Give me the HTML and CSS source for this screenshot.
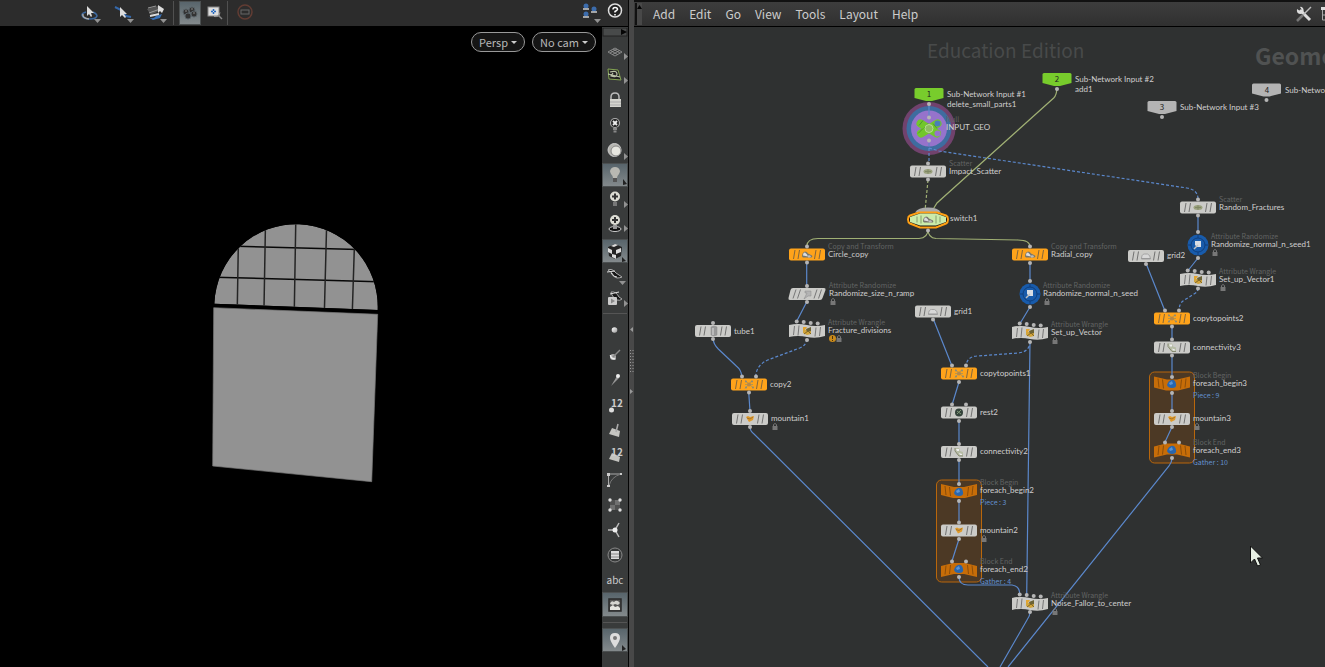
FILE: index.html
```
<!DOCTYPE HTML>
<html lang='en'>
<head>
<meta charset='utf-8'>
<title>Scene View and Network Editor</title>
<link rel="stylesheet" href="styles.css">
</head>
<body>
<!--shared shapes-->
<svg class='shared_shapes' aria-hidden='true'>
<defs>
<linearGradient id='ball' x1='0' y1='0' x2='1' y2='1'><stop offset='0' stop-color='#fff'/><stop offset='1' stop-color='#999'/></linearGradient>
<path id='caretRight' d='M22 14v7l4-3.500z' fill='#929292'/>
<path id='caretDown' d='M14 0h7l-3.500 4z' fill='#929292'/>
<g id='ticks' fill='none' stroke='#4b4b4b' stroke-opacity='.7'><path d='M-12-4.500l-1.500 9M-7.500-4.500l-1.500 9M9-4.500l-1.500 9M13.500-4.500l-1.500 9'/></g>
<g id='dotTop'><circle cy='-8' r='2'/></g>
<g id='dotBottom'><circle cy='8' r='2'/></g>
<g id='dotPair'><circle cx='-7' cy='-8' r='2'/><circle cx='7' cy='-8' r='2'/></g>
<g id='dotFour'><circle cx='-10.300' cy='-9.500' r='2'/><circle cx='-3.300' cy='-9' r='2'/><circle cx='3.700' cy='-8' r='2'/><circle cx='10.700' cy='-7.500' r='2'/></g>
<g id='box'><rect x='-18' y='-6' width='36' height='12' rx='2'/><use href='#ticks'/></g>
<g id='slant'><path d='M-15-6h32q2 0 1.500 2l-3 8q-.5 2-2.500 2h-30q-2 0-1.500-2l2-8q.5-2 2.500-2z'/><path d='M-11-4.500l-3 9M-6.500-4.500l-3 9M10-4.500l-3 9M14.500-4.500l-3 9' stroke='#777' fill='none'/></g>
<g id='wave'><path d='M-18-6q9-2 18 0t18 0v11q-9 3-18 1t-18 0z'/><path d='M-12.500-5l-1 9M-8-5.500l-1 10M9-3.500l-1 9M13.500-4l-1 9' stroke='#777' fill='none'/></g>
<g id='begin'><path d='M-18-7L-5-4H5L18-7V4L6 7H-6L-18 4z'/><path d='M-14-5l1 9M-9.500-4l1 9M9.500-4l-1 9M14-5l-1 9' stroke='#8c4d08' fill='none'/></g>
<g id='end'><path d='M-18-4L-6-7H6L18-4V7L5 4H-5L-18 7z'/><path d='M-13-4.500l-1 9M-8.500-5l-1 9M8.500-5l1 9M13-4.500l1 9' stroke='#8c4d08' fill='none'/></g>
<g id='hill'><path d='M-5 2q0-4 3-5 2 0 3 2l4 2q1 2-1 2h-8z' fill='#77776f'/><path d='M-4 1q0-3 2-3l2 2 1 2z' fill='#ddd'/><path d='M1 1q2-1 3 1l-1 1H1z' fill='#bbb'/></g>
<g id='leaf'><ellipse rx='4.500' ry='2.500' fill='#9aa17d'/><path d='M-3 0h6M0-2v4' stroke='#7f8765'/></g>
<g id='peak'><path d='M-4-2l2-1 2 1 4-1-1 4-4 2z' fill='#e09a2a'/><path d='M-3-1l3 1 3-2' stroke='#a5752d' fill='none'/></g>
<g id='wrangle'><path d='M-4-4h4l-2 3h-2z' fill='#e3a52f'/><path d='M-4-1h5l3 1v3l-4 1-4-2z' fill='#d2a53b'/><path d='M-1-2l5-2v4l-4 1z' fill='#6b6236'/><path d='M-3 3l4-3 3 3' stroke='#806727' fill='none'/></g>
<g id='scatter'><path d='M-4-4l8 7M-4 4l7-8M-4 0h8' stroke='#b5974b'/><circle r='2' fill='#b5884a'/><circle cx='3' cy='-3' r='1' fill='#8a8a78'/><circle cx='-3' cy='3' r='1' fill='#8a8a78'/><circle cx='-3' cy='-3' r='1' fill='#8a8a78'/><circle cx='4' cy='3' r='1' fill='#8a8a78'/></g>
<g id='link'><path d='M-4-4h4l1 3 3 1v4H0L-3 1z' fill='#b7bda6'/><path d='M-3-3h3v2h-2zM0 1l3 1v1H1z' fill='#eee'/><path d='M-4-4v3l4 5h4' fill='none' stroke='#858870'/></g>
<g id='dome'><path d='M-4.500 3q0-5 3-5h3q3 1 3 5z' fill='#d8d8d8' stroke='#a2a2a2'/><path d='M-4.500 2.500h9' stroke='#999'/></g>
<g id='blob'><path d='M-5 1q1-4 4-5 4-1 5 4 1 4-4 4-4 0-5-3z' fill='#2966ad'/><path d='M-3-1l3-2 1 3-3 1zM2-1l2 2' fill='#5c95d5'/></g>
<g id='lock'><rect x='-2.500' y='-1' width='5' height='4' fill='#777'/><path d='M-1.500-1v-1.500q1.500-2 3 0V-1' fill='none' stroke='#777'/></g>
<g id='disc'><circle r='10.500' fill='#185bab'/><circle r='7' fill='none' stroke='#103f7c' stroke-width='1'/><path d='M-10 0h3M7 0h3M0-10v3M0 7v3' stroke='#103f7c'/><path d='M-3-4h6v6h-4l-2-2z' fill='#d8dde4'/><path d='M0 0l-4 4' stroke='#c0c0c0' stroke-width='1.500'/><circle cy='-13' r='2' fill='#b5b5b5'/><circle cy='13' r='2' fill='#b5b5b5'/></g>
<path id='inputTab' d='M-13-6.500h26q1.500 0 1.500 1.500v8.500L3 6.500h-6L-14.500 3.500V-5q0-1.500 1.500-1.500z'/>
</defs>
</svg>

<div class='workspace'>
<!--scene pane starts here-->
<section class='scene_pane'>
<div class='tool_row'>
<button type='button' class='tool' aria-label='Select'><svg width='32' height='24' viewBox='0 0 32 24'><path d='M12 11q-4 1-4 3 1 4 8 4 6 0 7-3 0-2-4-4' fill='none' stroke='#3d689e' stroke-width='1.500'/><path d='M9 13q-1 4 6 5' fill='none' stroke='#aaa' stroke-width='1.500'/><path d='M13 5v10l2-2 2 3 1-1-1-3h3z' fill='#ddd'/><use href='#caretDown' x='6' y='18'/></svg></button>
<button type='button' class='tool' aria-label='Select edges'><svg width='32' height='24' viewBox='0 0 32 24'><path d='M8 6l6 3 5 6 5 1' fill='none' stroke='#3568aa' stroke-width='2'/><path d='M13 6v10l2-2 3 3 1-1-2-3h3z' fill='#ddd'/><use href='#caretDown' x='6' y='18'/></svg></button>
<button type='button' class='tool' aria-label='Move'><svg width='32' height='24' viewBox='0 0 32 24'><path d='M7 8l11-3 3 4-10 5z' fill='#555'/><path d='M8 7l8-2M9 12l11-4' stroke='#999'/><path d='M8 16q5 3 8-1l6-2-2 4-7 2z' fill='#3971b7'/><path d='M10 15l9-2' stroke='#ddd' stroke-width='2'/><path d='M18 4v8l2-2 2 2 1-2 1-2z' fill='#ddd'/><use href='#caretDown' x='6' y='18'/></svg></button>
<span class='tool_divider'></span>
<button type='button' class='tool small active' aria-label='Show geometry'><svg width='22' height='24' viewBox='0 0 22 24'><g fill='#333' stroke='#596267'><circle cx='7' cy='11' r='3'/><circle cx='13' cy='9' r='3'/><circle cx='15' cy='13' r='3'/><circle cx='9' cy='15' r='3'/></g><path d='M6 10h2M12 8h2M14 12h2' stroke='#888'/></svg></button>
<button type='button' class='tool small' aria-label='Zoom to selection'><svg width='24' height='24' viewBox='0 0 24 24'><rect x='6' y='6' width='11' height='9' fill='#ddd' stroke='#888'/><path d='M9 10.500h5M11.500 8v5' stroke='#286bc0' stroke-width='1.500' stroke-dasharray='2 1'/><path d='M12 15.500q5 1 6-4' fill='none' stroke='#999'/><path d='M16 14l4 4' stroke='#888' stroke-width='1.500'/></svg></button>
<span class='tool_divider'></span>
<button type='button' class='tool small' aria-label='Stop'><svg width='24' height='24' viewBox='0 0 24 24' fill='none'><circle cx='12' cy='11' r='7' stroke='#613c33' stroke-width='1.500'/><rect x='8' y='9' width='8' height='4' stroke='#666'/></svg></button>
<span class='tool_space'></span>
<button type='button' class='tool small' aria-label='Viewport layout'><svg width='24' height='24' viewBox='0 0 24 24'><g fill='#3c6cac'><circle cx='7' cy='5' r='2.500'/><circle cx='15' cy='8' r='2.500'/><circle cx='7' cy='13' r='2.500'/></g><path d='M4 8h6M12 11h6M4 16h6' stroke='#ccc' stroke-width='1.500'/><use href='#caretDown' x='1' y='18'/></svg></button>
<button type='button' class='tool small' aria-label='Help'><svg width='24' height='24' viewBox='0 0 24 24' fill='none'><circle cx='11' cy='9.500' r='6.500' fill='#222' stroke='#ddd' stroke-width='1.500'/><path d='M9 8.500q0-2 2-2 2.500 0 2.500 2-.5 1-2.500 2v1M11 13v1.500' stroke='#fff' stroke-width='1.500'/></svg></button>
</div>
<div class='scene_body'>
<!--3d view starts here-->
<div class='view'>
<div class='view_menus'>
<button type='button' class='pill'>Persp <span class='arrow'></span></button>
<button type='button' class='pill'>No cam <span class='arrow'></span></button>
</div>
<svg class='model' viewBox='0 27 602 640' role='img' aria-label='Arched window model'>
<defs><clipPath id='arch'><path d='M214.300 303.700A80 81 2 0 1 377.700 310z'/></clipPath></defs>
<g clip-path='url(#arch)'>
<path d='M214.300 303.700A80 81 2 0 1 377.700 310z' fill='#929292'/>
<path d='M236 246.200l122 3.300M215 277.200l163 4.600' stroke='#080808' stroke-width='1.500'/>
<path d='M238.300 246l-1 61M265.500 222l-1.500 86M295.800 220l-1.500 90M326.700 222l-2.300 89M354.300 249l-2 63' stroke='#242424' stroke-width='1.500'/>
</g>
<path d='M213.700 307.700l164 6.600-6 167.400-159-15.700z' fill='#929292' stroke='#777' stroke-width='.7'/>
</svg>
</div>
<!--3d view ends here-->
<!--display options start here-->
<div class='side_bar'>
<button type='button' class='side_head' aria-label='Expand toolbar'><svg width='26' height='10' viewBox='0 0 26 10'><rect x='1' y='0' width='24' height='8' fill='#484a4a' stroke='#222'/><path d='M19 1v6l6-3z' fill='#050505'/></svg></button>
<div class='side_group tall'>
<button type='button' aria-label='Grid'><svg width='26' height='24' viewBox='0 0 26 24'><path d='M6 13l7-4 7 4-7 4zM8.500 11.500l7 4M11 10l7 4M17.500 11.500l-7 4M15 10l-7 4' fill='none' stroke='#999' stroke-width='.8'/><use href='#caretRight'/></svg></button>
<button type='button' aria-label='Construction plane'><svg width='26' height='24' viewBox='0 0 26 24'><path d='M6 5l10 1 3 10-12-1z' fill='#222' stroke='#85a653'/><path d='M8 8q7-2 7 2 0 4-6 2l2-3M6 10l12 3' fill='none' stroke='#b9c2a8' stroke-width='1.200'/><use href='#caretRight' y='-1'/></svg></button>
<button type='button' aria-label='Lock camera'><svg width='26' height='24' viewBox='0 0 26 24'><path d='M9 11V8q0-4 4-4t4 4v3' fill='none' stroke='#bbb' stroke-width='1.500'/><rect x='8' y='10' width='11' height='8' fill='#d4d4ce'/><path d='M8 13h11M8 16h11' stroke='#aaa'/></svg></button>
<button type='button' aria-label='No lighting'><svg width='26' height='24' viewBox='0 0 26 24'><circle cx='13' cy='9' r='4.500' fill='#222' stroke='#aaa' stroke-width='1.200'/><path d='M11 7l4 4M15 7l-4 4' stroke='#eee' stroke-width='1.800'/><path d='M11 15h4M11.500 17.500h3' stroke='#888' stroke-width='2'/></svg></button>
<button type='button' aria-label='Headlight'><svg width='26' height='24' viewBox='0 0 26 24'><circle cx='12.500' cy='11' r='6.500' fill='#b6b6b0' stroke='#ccc'/><circle cx='14' cy='12' r='5' fill='#e7e7e0' stroke='#888'/><use href='#caretRight'/></svg></button>
</div>
<div class='side_group'>
<button type='button' class='active' aria-label='Normal lighting'><svg width='26' height='24' viewBox='0 0 26 24'><path d='M11 15q0-2-2-4-1-2-1-3 1-4 5-4t5 4q0 1-1 3-2 2-2 4z' fill='#b8b8b2'/><path d='M11 15h4v4h-4z' fill='#555'/><path d='M21 16v6l4-1z' fill='#222'/></svg></button>
<button type='button' aria-label='High quality lighting'><svg width='26' height='24' viewBox='0 0 26 24'><circle cx='13' cy='9.500' r='5' fill='#ddddd4'/><path d='M10 9.500h6M13 6.500v6' stroke='#333' stroke-width='2'/><path d='M11 15h4v4h-4z' fill='#777'/><use href='#caretRight'/></svg></button>
<button type='button' aria-label='Shadows'><svg width='26' height='24' viewBox='0 0 26 24'><ellipse cx='13' cy='18' rx='6' ry='2.500' fill='#111' stroke='#ccc'/><circle cx='13' cy='9' r='5' fill='#ddddd4'/><path d='M10 9h6M13 6v6' stroke='#333' stroke-width='2'/><path d='M11 14h4v4h-4z' fill='#999'/><use href='#caretRight'/></svg></button>
</div>
<div class='side_group spaced'>
<button type='button' class='active' aria-label='Materials'><svg width='26' height='24' viewBox='0 0 26 24'><path d='M6 8l7-3 7 3-1 9-6 3-6-3z' fill='#242424'/><path d='M9 7l4-2 3 1-4 2zM6 9l4 2v4l-4-2zM14 11l5-2v4l-5 2zM10 15l4 1v4l-4-2z' fill='#ddd'/><path d='M20 18v5l4-1z' fill='#222'/></svg></button>
<button type='button' aria-label='Hide objects'><svg width='26' height='24' viewBox='0 0 26 24'><path d='M6 7q4-2 8 3l6 4q-2 1-5 1-3 0-5-5z' fill='#171717' stroke='#aaa'/><path d='M5 9l8-1M9 10q2 4 6 4' stroke='#ddd' fill='none'/><use href='#caretDown' x='3' y='18'/></svg></button>
<button type='button' aria-label='Ghost objects'><svg width='26' height='24' viewBox='0 0 26 24'><path d='M9 5q5-1 8 5l3 2q-2 2-5 1-3-1-5-5z' fill='#171717' stroke='#aaa'/><path d='M8 7l9-2' stroke='#ddd'/><rect x='6' y='10' width='9' height='8' rx='1' fill='#ccc'/><path d='M9 11.500v5l4-2.500z' fill='#888'/><use href='#caretRight' y='-1'/></svg></button>
</div>
<hr>
<div class='side_group tall points'>
<button type='button' aria-label='Points'><svg width='26' height='24'><circle cx='12.500' cy='12' r='2.800' fill='url(#ball)'/></svg></button>
<button type='button' aria-label='Point normals'><svg width='26' height='24' viewBox='0 0 26 24'><circle cx='11' cy='14' r='3' fill='#aaa'/><path d='M11 14l7-7' stroke='#888' stroke-width='1.500'/><path d='M8.500 12q0 4 5 4' stroke='#eee' fill='none' stroke-width='1.500'/></svg></button>
<button type='button' aria-label='Point trails'><svg width='26' height='24' viewBox='0 0 26 24'><path d='M15 8l2 2-8 8z' fill='#999'/><circle cx='16' cy='8' r='2' fill='#eee'/></svg></button>
<button type='button'><svg width='26' height='24' viewBox='0 0 26 24'><circle cx='9.500' cy='17' r='2.500' fill='#ddd'/><text x='9' y='14' class='icon_number'>12</text></svg></button>
<button type='button' aria-label='Primitive normals'><svg width='26' height='24' viewBox='0 0 26 24'><path d='M10 10l8 3-1 6-10-3z' fill='#c4c4c0'/><path d='M14 14l2-8' stroke='#aaa' stroke-width='1.500'/></svg></button>
<button type='button'><svg width='26' height='24' viewBox='0 0 26 24'><path d='M10 10l8 4-1 5-10-3z' fill='#c4c4c0'/><text x='9' y='13' class='icon_number'>12</text></svg></button>
<button type='button' aria-label='Profile curves'><svg width='26' height='24' viewBox='0 0 26 24'><path d='M6.500 19V6H19' stroke='#aaa' fill='none'/><path d='M7 18Q9 9 19 6' stroke='#777' fill='none'/><path d='M5 5h3v3H5zM18 5h2v2h-2zM5 17h3v2H5z' fill='#ccc'/></svg></button>
<button type='button' aria-label='UV points'><svg width='26' height='24' viewBox='0 0 26 24'><path d='M8 7h10v10H8z' fill='#707070'/><path d='M8 7h5v5H8zM13 12h5v5h-5z' fill='#505050'/><g fill='#ddd'><circle cx='8' cy='7' r='1.700'/><circle cx='18' cy='7' r='1.700'/><circle cx='8' cy='17' r='1.700'/><circle cx='18' cy='17' r='1.700'/></g></svg></button>
<button type='button' aria-label='Vertex markers'><svg width='26' height='24' viewBox='0 0 26 24'><path d='M6 12h7l4-7M13 12l4 7' fill='none' stroke='#bbb' stroke-width='1.500'/><circle cx='13' cy='12' r='2.500' fill='#eee'/></svg></button>
<button type='button' aria-label='Group list'><svg width='26' height='24' viewBox='0 0 26 24'><circle cx='13' cy='12' r='7' fill='none' stroke='#888'/><path d='M9 8h8v8H9z' fill='#ddd'/><path d='M9 11h8M9 14h8' stroke='#888'/></svg></button>
<button type='button' class='text_tool'>abc</button>
<button type='button' class='active' aria-label='Background image'><svg width='26' height='24' viewBox='0 0 26 24'><rect x='7' y='6' width='12' height='12' fill='#555' stroke='#2a2a2a' stroke-width='1.500'/><path d='M8 17v-3l3-2 2 2 3-1 2 2v2z' fill='#e4e4e0'/><path d='M8 11q1-4 4-2 3-3 6 1l-2 2-3-1-2 1z' fill='#d4d4d0'/></svg></button>
</div>
<hr>
<div class='side_group'>
<button type='button' class='active' aria-label='Pin view'><svg width='26' height='24' viewBox='0 0 26 24'><path d='M13 20q-5-7-5-10 0-5 5-5t5 5q0 3-5 10z' fill='#ddd'/><circle cx='13' cy='10' r='2' fill='#777'/><path d='M20 17v6l4-2z' fill='#222'/></svg></button>
</div>
</div>
<!--display options end here-->
</div>
</section>
<!--scene pane ends here-->

<div class='splitter'><svg width='5' height='80' viewBox='0 0 5 80'><path d='M4 7v5L1 9.500zM1 69v5l3-2.500z' fill='#999'/><path d='M1.500 30v22M4 30v22' stroke='#999' stroke-dasharray='1 2'/></svg></div>

<!--network pane starts here-->
<section class='network_pane'>
<nav class='menu_bar'>
<span class='menu_grip'><svg width='5' height='8' viewBox='0 0 5 8'><path d='M0 6l2.500-4L5 6z' fill='#050505'/></svg></span>
<button type='button'>Add</button>
<button type='button'>Edit</button>
<button type='button'>Go</button>
<button type='button'>View</button>
<button type='button'>Tools</button>
<button type='button'>Layout</button>
<button type='button'>Help</button>
<span class='tool_space'></span>
<button type='button' class='wrench' aria-label='Tools palette'><svg width='18' height='18' viewBox='0 0 18 18'><path d='M5 5l10 10' stroke='#ddd' stroke-width='3'/><path d='M2 4q-1 5 4 5 4-2 2-6-2-2-3-1l2 3-2 1z' fill='#ddd'/><path d='M16 2L8 10' stroke='#bbb' stroke-width='1.500'/><path d='M8 10l-6 6' stroke='#777' stroke-width='2.500'/></svg></button>
<button type='button' class='list_icon' aria-label='List view'><svg width='5' height='14' viewBox='0 0 5 14'><path d='M1 1.500h4' stroke='#ddd' stroke-width='3'/><path d='M2.500 3v10H5M2.500 8H5' stroke='#aaa' fill='none'/></svg></button>
</nav>
<svg class='network' viewBox='634 27 691 640' preserveAspectRatio='xMinYMin slice'>
<text x='927' y='58' class='watermark'>Education Edition</text>
<text x='1255' y='65' class='watermark context'>Geometry</text>

<!--foreach blocks-->
<g class='block'><rect x='936.500' y='480' width='45' height='102' rx='5'/><rect x='1149.500' y='372' width='45' height='91' rx='5'/></g>

<!--input halo-->
<circle cx='929' cy='128.500' r='26.500' fill='#71426d'/><circle cx='929' cy='128.500' r='22.500' fill='#3e6c9f'/><circle cx='929' cy='128.500' r='18' fill='#9673cb'/>

<!--wires-->
<g class='wire'>
<path d='M929 104v13M806.700 262v24M806.700 302l-10.400 20M713.300 339q0 5 5 10l18 17q5 4 5.400 10M748.700 392l1.300 19M750 427q0 4 4 7l234 233'/>
<path d='M933.300 319l18.700 47M1030 263v18M1030 307l-10.300 17M1030 341l-3.300 254M959 382l-7 23M959 421v23M959 460v23M959 499v24M959 539l-7 22M959 577q0 8 9 8h44q8 1 7.700 10M1030 612q0 4-3 8l-27 47'/>
<path d='M1198 216v16M1198 258l-10.300 13M1146.300 264l18.700 47M1172 326v13M1172 355v20M1172 391v20M1172 427l-7 15M1172 458q0 4-3 8l-161 201'/>
<g stroke-dasharray='3 2'><path d='M929 143v20M929 148l10 3 248 37q11 2 11 11M806.700 339q0 6-7 9l-32 12q-11 5-12 16M1030 341q0 11-12 12l-40 3q-11 0-12 10M1198 288q0 4-4 6l-11 7q-4 3-4 10'/></g>
</g>
<g class='wire green'>
<path d='M1056.700 89q0 6-3 9L937 203l-5 8M928 229q0 9-9 9.500l-101 0q-11 0-11.300 8M928 229q0 9 8 9.500l82 1.500q12 0 12 7'/>
<path d='M928 180l-3 31' stroke-dasharray='3 2'/>
</g>

<!--network inputs-->
<g class='input_on'><use href='#inputTab' x='929' y='94.500'/><use href='#inputTab' x='1057' y='79.500'/></g>
<g class='input_off'><use href='#inputTab' x='1162' y='107.500'/><use href='#inputTab' x='1266.500' y='90'/></g>
<g class='input_number'><text x='929' y='97'>1</text><text x='1057' y='82'>2</text><text x='1162' y='110'>3</text><text x='1267' y='93'>4</text></g>
<g fill='#b5b5b5'><circle cx='929' cy='104' r='2'/><circle cx='1057' cy='89' r='2'/><circle cx='1162' cy='117' r='2'/><circle cx='1266.500' cy='100' r='2'/></g>

<!--INPUT_GEO-->
<g transform='translate(929 128.500)'>
<path d='M-8.500-5L8 5M8.500-5L-8 5' stroke='#72c72c' stroke-width='8' stroke-linecap='round'/>
<circle cx='8.500' cy='-5' r='3' fill='#4a7eb7'/><circle cx='8.500' cy='5' r='3' fill='#9673cb'/>
<path d='M-10-3l4-5M-5 0l4-5M-11 5l5-5M4-5l4 5' stroke='#4e992a'/>
<circle r='4' fill='#8fbc64' stroke='#b6df91'/><circle cy='-11' r='2' fill='#b5b5b5'/><circle cy='12' r='2' fill='#b5b5b5'/>
</g>

<!--switch1-->
<g transform='translate(928 219.500)'>
<path d='M-13-7q3-5 13-5t13 5' fill='#aaa'/>
<path d='M-18-4L-9-7H9L18-4Q20-3 20 0T18 4L8 8H-8L-18 4Q-20 3-20 0T-18-4z' fill='#111' stroke='#ffa014' stroke-width='2'/>
<path d='M-18-2.500L-8-6H8L18-2.500v5L8 6H-8L-18 2.500z' fill='#cbecaa'/>
<path d='M-11-3v6M-7-4v8M8-4v8M12-3v6' stroke='#879e6e'/><use href='#hill'/>
<circle cy='11' r='2' fill='#b5b5b5'/>
</g>

<!--plain nodes-->
<g class='plain'>
<use href='#box' x='928' y='171.500'/><use href='#slant' x='807' y='294'/><use href='#wave' x='807' y='331'/><use href='#box' x='713' y='331'/><use href='#box' x='750' y='419'/>
<use href='#box' x='933' y='311.500'/><use href='#wave' x='1030' y='333'/><use href='#box' x='959' y='412.500'/><use href='#box' x='959' y='452'/><use href='#box' x='959' y='530.500'/><use href='#wave' x='1030' y='604'/>
<use href='#box' x='1198' y='207.500'/><use href='#wave' x='1198' y='280'/><use href='#box' x='1146' y='256'/><use href='#box' x='1172' y='347.500'/><use href='#box' x='1172' y='419'/>
</g>
<!--coloured nodes-->
<g class='copy'><use href='#box' x='807' y='254.500'/><use href='#box' x='749' y='384.500'/><use href='#box' x='1030' y='254.500'/><use href='#box' x='959' y='373.500'/><use href='#box' x='1172' y='318.500'/></g>
<g class='loop'><use href='#begin' x='959' y='491'/><use href='#end' x='959' y='570'/><use href='#begin' x='1172' y='383.500'/><use href='#end' x='1172' y='450.500'/></g>
<use href='#disc' x='1030' y='294'/><use href='#disc' x='1198' y='245'/>

<!--node glyphs-->
<use href='#leaf' x='928' y='171.500'/><use href='#leaf' x='1198' y='207.500'/>
<use href='#hill' x='807' y='254.500'/><use href='#hill' x='1030' y='254.500'/>
<use href='#scatter' x='749' y='384.500'/><use href='#scatter' x='959' y='373.500'/><use href='#scatter' x='1172' y='318.500'/>
<use href='#wrangle' x='807' y='331'/><use href='#wrangle' x='1030' y='333'/><use href='#wrangle' x='1030' y='604'/><use href='#wrangle' x='1198' y='280'/>
<use href='#peak' x='750' y='419'/><use href='#peak' x='959' y='530.500'/><use href='#peak' x='1172' y='419'/>
<use href='#link' x='959' y='452'/><use href='#link' x='1172' y='347.500'/>
<use href='#dome' x='933' y='311.500'/><use href='#dome' x='1146' y='256'/>
<use href='#blob' x='959' y='492'/><use href='#blob' x='959' y='569'/><use href='#blob' x='1172' y='384'/><use href='#blob' x='1172' y='450'/>
<path d='M711 327l3-1 3 1v8l-3 1-3-1z' fill='#999' stroke='#888' stroke-width='.5'/><path d='M713 328v7' stroke='#ddd'/>
<path d='M805 297l2-4h-2v-2h6v5h-3l-4 3z' fill='#b4b4b4' stroke='#888' stroke-width='.5'/>
<circle cx='959' cy='412.500' r='4' fill='#34433b'/><path d='M957 414l4-4M957 411l4 3' stroke='#7c9475'/>

<!--connectors-->
<g fill='#b5b5b5'>
<use href='#dotTop' x='928' y='171.500'/><use href='#dotTop' x='807' y='254.500'/><use href='#dotTop' x='807' y='294'/><use href='#dotTop' x='713' y='331'/><use href='#dotTop' x='750' y='419'/><use href='#dotTop' x='1030' y='254.500'/><use href='#dotTop' x='959' y='452'/><use href='#dotTop' x='959' y='492'/><use href='#dotTop' x='959' y='530.500'/><use href='#dotTop' x='1198' y='207.500'/><use href='#dotTop' x='1172' y='347.500'/><use href='#dotTop' x='1172' y='385'/><use href='#dotTop' x='1172' y='419'/>
<use href='#dotPair' x='749' y='384.500'/><use href='#dotPair' x='959' y='373.500'/><use href='#dotPair' x='959' y='412.500'/><use href='#dotPair' x='959' y='569.500'/><use href='#dotPair' x='1172' y='318.500'/><use href='#dotPair' x='1172' y='450.500'/>
<use href='#dotFour' x='807' y='331'/><use href='#dotFour' x='1030' y='333'/><use href='#dotFour' x='1030' y='604'/><use href='#dotFour' x='1198' y='280'/>
<use href='#dotBottom' x='928' y='171.500'/><use href='#dotBottom' x='807' y='254.500'/><use href='#dotBottom' x='807' y='294'/><use href='#dotBottom' x='807' y='332'/><use href='#dotBottom' x='713' y='331'/><use href='#dotBottom' x='749' y='384.500'/><use href='#dotBottom' x='750' y='419'/><use href='#dotBottom' x='933' y='311.500'/><use href='#dotBottom' x='1030' y='255'/><use href='#dotBottom' x='1030' y='334'/><use href='#dotBottom' x='959' y='374'/><use href='#dotBottom' x='959' y='413'/><use href='#dotBottom' x='959' y='452'/><use href='#dotBottom' x='959' y='493'/><use href='#dotBottom' x='959' y='531'/><use href='#dotBottom' x='959' y='569'/><use href='#dotBottom' x='1030' y='604'/><use href='#dotBottom' x='1198' y='207.500'/><use href='#dotBottom' x='1198' y='280.500'/><use href='#dotBottom' x='1146' y='256'/><use href='#dotBottom' x='1172' y='318.500'/><use href='#dotBottom' x='1172' y='347.500'/><use href='#dotBottom' x='1172' y='385'/><use href='#dotBottom' x='1172' y='419'/><use href='#dotBottom' x='1172' y='450'/>
</g>

<!--locks-->
<use href='#lock' x='833' y='302'/><use href='#lock' x='839' y='339'/><use href='#lock' x='775' y='427'/><use href='#lock' x='1047' y='302'/><use href='#lock' x='1055' y='341'/><use href='#lock' x='984' y='539'/><use href='#lock' x='1055' y='612'/><use href='#lock' x='1215' y='253'/><use href='#lock' x='1223' y='288'/><use href='#lock' x='1197' y='427'/>
<circle cx='832.500' cy='338.500' r='3.500' fill='#c98a1a'/><path d='M832.500 336v3M832.500 340v1' stroke='#4a3310'/>

<!--node types-->
<g class='node_type'>
<text x='946' y='122'>Null</text><text x='949' y='166'>Scatter</text>
<text x='828' y='249'>Copy and Transform</text><text x='829' y='288'>Attribute Randomize</text><text x='828' y='325'>Attribute Wrangle</text>
<text x='1051' y='249'>Copy and Transform</text><text x='1043' y='288'>Attribute Randomize</text><text x='1051' y='327'>Attribute Wrangle</text>
<text x='980' y='485'>Block Begin</text><text x='980' y='564'>Block End</text><text x='1051' y='598'>Attribute Wrangle</text>
<text x='1219' y='202'>Scatter</text><text x='1211' y='239'>Attribute Randomize</text><text x='1219' y='274'>Attribute Wrangle</text>
<text x='1193' y='378'>Block Begin</text><text x='1193' y='445'>Block End</text>
</g>
<!--node names-->
<g class='node_name'>
<text x='947' y='97'>Sub-Network Input #1</text><text x='947' y='107'>delete_small_parts1</text>
<text x='1075' y='82'>Sub-Network Input #2</text><text x='1075' y='92'>add1</text>
<text x='1180' y='110'>Sub-Network Input #3</text><text x='1285' y='93'>Sub-Network Input #4</text>
<text x='946' y='130'>INPUT_GEO</text><text x='949' y='174'>Impact_Scatter</text><text x='950' y='221'>switch1</text>
<text x='828' y='257'>Circle_copy</text><text x='829' y='296'>Randomize_size_n_ramp</text><text x='828' y='333'>Fracture_divisions</text>
<text x='734' y='334'>tube1</text><text x='770' y='387'>copy2</text><text x='771' y='421'>mountain1</text>
<text x='954' y='314'>grid1</text><text x='1051' y='257'>Radial_copy</text><text x='1043' y='296'>Randomize_normal_n_seed</text><text x='1051' y='335'>Set_up_Vector</text>
<text x='980' y='376'>copytopoints1</text><text x='980' y='415'>rest2</text><text x='980' y='454'>connectivity2</text>
<text x='980' y='493'>foreach_begin2</text><text x='980' y='533'>mountain2</text><text x='980' y='572'>foreach_end2</text><text x='1051' y='606'>Noise_Fallor_to_center</text>
<text x='1219' y='210'>Random_Fractures</text><text x='1211' y='247'>Randomize_normal_n_seed1</text><text x='1219' y='282'>Set_up_Vector1</text><text x='1167' y='258'>grid2</text>
<text x='1193' y='321'>copytopoints2</text><text x='1193' y='350'>connectivity3</text><text x='1193' y='386'>foreach_begin3</text><text x='1193' y='421'>mountain3</text><text x='1193' y='453'>foreach_end3</text>
</g>
<g class='node_info'><text x='980' y='505'>Piece : 3</text><text x='980' y='584'>Gather : 4</text><text x='1193' y='398'>Piece : 9</text><text x='1193' y='465'>Gather : 10</text></g>

<!--pointer-->
<path d='M1250.500 546v17l4-4 3 7 3-1-3-7h5z' fill='#e8f0e4' stroke='#111'/>
</svg>
</section>
<!--network pane ends here-->
</div>
</body>
</html>
```

FILE: styles.css
```
*
{
box-sizing:border-box;
}
body
{
margin:0;
background:#000;
color:#ccc;
font-family:"Noto Sans CJK SC","Noto Sans",sans-serif;
font-size:12px;
line-height:16px;
}
button
{
margin:0;
padding:0;
border:0;
background:none;
color:inherit;
font:inherit;
}
svg
{
display:block;
}
.shared_shapes
{
position:absolute;
width:0;
height:0;
}
.workspace
{
display:flex;
height:100vh;
overflow:hidden;
}
.scene_pane
{
flex:628 1 0;
min-width:0;
display:flex;
flex-direction:column;
border-right:1px solid #050505;
}
.tool_row
{
display:flex;
align-items:center;
height:27px;
padding-left:74px;
gap:1px;
background:#2c2c2c;
border-bottom:1px solid #000;
}
.tool
{
width:32px;
height:24px;
}
.tool.small
{
width:24px;
}
.tool.small.active
{
width:22px;
}
.tool_divider
{
width:1px;
height:24px;
margin-right:4px;
background:#505050;
}
.tool_space
{
flex:1;
}
.active
{
background:linear-gradient(#56636a,#858b8d);
box-shadow:inset 0 0 0 1px #4c5051;
}
.scene_body
{
flex:1;
display:flex;
min-height:0;
}
.view
{
position:relative;
flex:1;
min-width:0;
background:#000;
}
.model
{
width:100%;
height:100%;
}
.view_menus
{
position:absolute;
top:5px;
right:6px;
display:flex;
gap:7px;
}
.pill
{
display:flex;
align-items:center;
gap:3px;
height:20px;
padding:0 7px;
border:1px solid #999;
border-radius:10px;
background:#151515;
color:#b8b8b8;
font-size:11px;
}
.arrow
{
border:3px solid transparent;
border-top-color:#ccc;
border-bottom:0;
}
.side_bar
{
width:26px;
background:#393b3b;
overflow:hidden;
}
.side_head
{
display:block;
height:11px;
}
.side_group button
{
display:flex;
align-items:center;
justify-content:center;
width:26px;
height:24px;
}
.side_group.tall button
{
height:25px;
}
.spaced
{
margin-top:4px;
}
.side_bar hr
{
height:1px;
margin:2px 1px 3px;
border:0;
background:#555;
}
.side_bar .points + hr
{
margin:5px 1px;
}
.icon_number
{
font-size:10px;
font-weight:bold;
fill:#ccc;
}
.side_group .text_tool
{
font-size:10px;
}
.splitter
{
display:flex;
align-items:center;
width:5px;
padding-top:52px;
background:#484848;
}
.network_pane
{
flex:691 1 0;
min-width:0;
display:flex;
flex-direction:column;
background:#2f3131;
}
.menu_bar
{
display:flex;
align-items:center;
gap:14px;
height:27px;
border-top:2px solid #111;
border-bottom:1px solid #000;
background:linear-gradient(#3d3d3d,#303030);
}
.menu_grip
{
width:7px;
height:22px;
margin-left:1px;
margin-right:-3px;
border-left:2px solid #111;
background:#484848;
}
.menu_bar .wrench
{
margin-right:-7px;
}
.network
{
flex:1;
width:100%;
min-height:0;
}
.watermark
{
font-size:19px;
fill:#484a4a;
}
.context
{
font-size:23px;
font-weight:bold;
fill:#505252;
}
.block rect
{
fill:#4c3925;
stroke:#b9670c;
}
.wire
{
fill:none;
stroke:#5b88cc;
stroke-width:1.2;
}
.green
{
stroke:#a0b074;
}
.input_on
{
fill:#78cc2c;
}
.input_off
{
fill:#b4b4b4;
}
.input_number
{
font-size:8px;
fill:#222;
text-anchor:middle;
}
.plain
{
fill:#cbcbc8;
}
.copy
{
fill:#ffa31a;
}
.loop
{
fill:#c76d08;
}
.node_name
{
font-family:Lato,"Noto Sans",sans-serif;
font-size:8px;
fill:#cfcfcf;
}
.node_type
{
font-size:7px;
fill:#626464;
}
.node_info
{
font-size:7px;
fill:#6492d2;
}
```
